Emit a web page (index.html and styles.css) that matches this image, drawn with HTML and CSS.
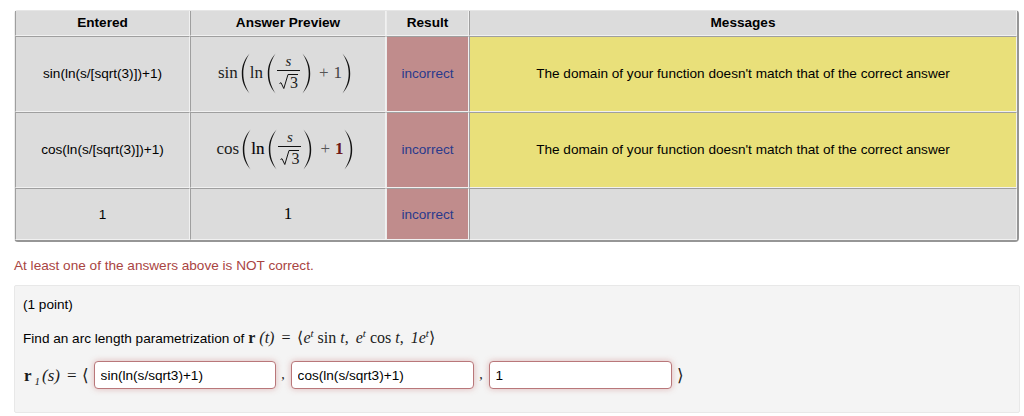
FILE: index.html
```html
<!DOCTYPE html>
<html lang="en">
<head>
<meta charset="utf-8">
<title>Arc length parametrization</title>
<link rel="stylesheet" href="styles.css">
</head>
<body>
<svg class="defs" width="0" height="0" aria-hidden="true"><symbol id="paren" viewBox="0 0 9 41"><path d="M8.500 0.500C3 7 0.800 13 0.800 20.500S3 34 8.500 40.500C4.300 33.500 2.300 28 2.300 20.500S4.300 7.500 8.500 0.500Z"/></symbol></svg>
<table class="results">
  <colgroup><col class="c1"><col class="c2"><col class="c3"><col class="c4"></colgroup>
  <tr class="head"><th>Entered</th><th>Answer Preview</th><th class="rc">Result</th><th>Messages</th></tr>
  <tr class="tall">
    <td>sin(ln(s/[sqrt(3)])+1)</td>
    <td>
      <span class="m m-big">
        <span class="fn">sin</span>
        <svg class="paren p1" width="9" height="41"><use href="#paren"/></svg>
        <span class="fn">ln</span>
        <svg class="paren p2" width="9" height="41"><use href="#paren"/></svg>
        <span class="frac"><i class="num">s</i><span class="den"><svg class="rad" width="11" height="16" viewBox="0 0 11 16"><path d="M0.500 9.500L2 8.700 4.800 14.500 9 0.500H11"/></svg><span class="rad-in">3</span></span></span>
        <svg class="paren flip p3" width="9" height="41"><use href="#paren"/></svg>
        <span class="op">+</span><span class="fn lite">1</span>
        <svg class="paren flip" width="9" height="41"><use href="#paren"/></svg>
      </span>
    </td>
    <td class="bad">incorrect</td>
    <td class="msg">The domain of your function doesn't match that of the correct answer</td>
  </tr>
  <tr class="tall">
    <td>cos(ln(s/[sqrt(3)])+1)</td>
    <td>
      <span class="m m-big">
        <span class="fn">cos</span>
        <svg class="paren p1" width="9" height="41"><use href="#paren"/></svg>
        <span class="fn dark">ln</span>
        <svg class="paren p2" width="9" height="41"><use href="#paren"/></svg>
        <span class="frac"><i class="num">s</i><span class="den"><svg class="rad" width="11" height="16" viewBox="0 0 11 16"><path d="M0.500 9.500L2 8.700 4.800 14.500 9 0.500H11"/></svg><span class="rad-in">3</span></span></span>
        <svg class="paren flip p3" width="9" height="41"><use href="#paren"/></svg>
        <span class="op red">+</span><span class="fn red strong">1</span>
        <svg class="paren flip" width="9" height="41"><use href="#paren"/></svg>
      </span>
    </td>
    <td class="bad">incorrect</td>
    <td class="msg">The domain of your function doesn't match that of the correct answer</td>
  </tr>
  <tr class="short">
    <td>1</td>
    <td><span class="m one">1</span></td>
    <td class="bad">incorrect</td>
    <td></td>
  </tr>
</table>
<p class="warn">At least one of the answers above is NOT correct.</p>
<section class="problem">
  <p class="pts">(1 point)</p>
  <p class="find">Find an arc length parametrization of <span class="m formula"><b>r</b><i class="tight">(t)</i><span class="eq">=</span><span class="ang">⟨</span><i>e</i><sup><i>t</i></sup> sin <i>t</i>, <i class="gap">e</i><sup><i>t</i></sup> cos <i>t</i>, <i class="gap">1e</i><sup><i>t</i></sup><span class="ang">⟩</span></span></p>
  <div class="answer">
    <span class="m lhs"><b>r</b><sub><i>1</i></sub><i class="arg">(s)</i><span class="eq">=</span><span class="ang">⟨</span></span>
    <input class="box" value="sin(ln(s/sqrt3)+1)">
    <span class="m comma">,</span>
    <input class="box" value="cos(ln(s/sqrt3)+1)">
    <span class="m comma">,</span>
    <input class="box" value="1">
    <span class="m close ang">⟩</span>
  </div>
</section>
</body>
</html>
```
FILE: styles.css
```css
* { box-sizing: border-box; }
html, body { margin: 0; background: #fff; }
body {
  padding: 10px 5px 0 14px;
  font-family: "Liberation Sans", Arial, sans-serif;
  font-size: 13.6px;
  color: #000;
  overflow: hidden;
}
.defs { position: absolute; }
.results {
  width: 1005px;
  table-layout: fixed;
  border-collapse: separate;
  border-spacing: 0;
  border-top: 1px solid #e6e6e6;
  border-left: 1px solid #ececec;
  border-right: 2px solid #969696;
  border-bottom: 2px solid #969696;
  border-radius: 4px;
}
.c1 { width: 175px; }
.c2 { width: 196px; }
.c3 { width: 83px; }
.results th, .results td {
  background: #dcdcdc;
  text-align: center;
  padding: 0;
  border-left: 1px solid #9f9f9f;
  border-top: 1px solid #9f9f9f;
  border-right: 1px solid #f1f1f1;
  border-bottom: 1px solid #f1f1f1;
}
.results th { font-size: 13.6px; border-top: 0; padding-bottom: 2px; }
.head th { height: 25px; }
.tall td { height: 76px; padding-bottom: 2px; }
.short td { height: 52px; }
.results th.rc, .results td.bad { border-left-color: #ececec; }
.results td.bad { background: #c08c8c; color: #2a3a8c; }
.results td.msg { background: #e9e07a; }
.m {
  font-family: "Liberation Serif", "Times New Roman", serif;
  font-size: 17px;
  color: #1c1c1c;
}
.m-big {
  display: inline-flex;
  align-items: center;
  justify-content: center;
  height: 41px;
  margin-right: 7px;
  vertical-align: middle;
}
.strong { font-weight: 700; }
.dark { color: #000; -webkit-text-stroke: 0.15px #000; }
.lite { color: #444; }
.red { color: #6e1a1a; }
.op { margin: 0 5px 0 8px; color: #555; }
.paren { display: block; fill: #111; }
.p1 { margin-left: 3px; }
.p2 { margin-left: 4px; margin-right: 1px; }
.p3 { margin-left: 2px; }
.flip { transform: scaleX(-1); }
.frac {
  display: inline-flex;
  flex-direction: column;
  align-items: center;
  width: 23px;
  line-height: 1;
  margin-top: -2px;
}
.num { font-size: 15px; padding-bottom: 1px; }
.den {
  display: flex;
  align-items: flex-end;
  justify-content: center;
  width: 100%;
  height: 20px;
  border-top: 1px solid #111;
}
.rad { display: block; fill: none; stroke: #111; stroke-width: 1; }
.rad-in { font-size: 16px; border-top: 1px solid #111; line-height: 15px; }
.one { color: #000; }
.warn {
  margin: 16px 0 0;
  height: 15px;
  line-height: 15px;
  color: #a94442;
}
.problem {
  margin: 12px 0 0;
  width: 1006px;
  height: 128px;
  padding: 11px 9px 0 8px;
  background: #f4f4f4;
  border: 1px solid #e8e8e8;
  border-radius: 2px;
}
.problem p { margin: 0; line-height: 15px; }
.problem .find { margin-top: 17px; line-height: 18px; }
.formula { font-size: 16px; }
.tight { margin-left: 4px; }
.formula .eq { margin: 0 7px; }
.ang { font-weight: 400; color: #222; }
.formula .gap { margin-left: 3px; }
sup, sub { font-size: 11px; line-height: 0; }
.answer {
  display: flex;
  align-items: center;
  margin-top: 12px;
  height: 30px;
}
.lhs { margin-right: 5px; margin-left: 1px; white-space: pre; }
.lhs sub { margin-left: 3px; }
.arg { margin-left: 2px; }
.lhs .eq { margin: 0 5px 0 7px; }
.box {
  width: 182px;
  height: 28px;
  padding: 0 6px;
  font: 13.6px "Liberation Sans", Arial, sans-serif;
  color: #000;
  background: #fff;
  border: 1px solid #b9777a;
  border-radius: 4px;
  box-shadow: 0 0 6px rgba(185, 74, 72, .35);
  outline: 0;
}
.box + .comma + .box { width: 183px; }
.comma { width: 15px; text-align: center; font-size: 14px; }
.close { margin-left: 5px; }
```
